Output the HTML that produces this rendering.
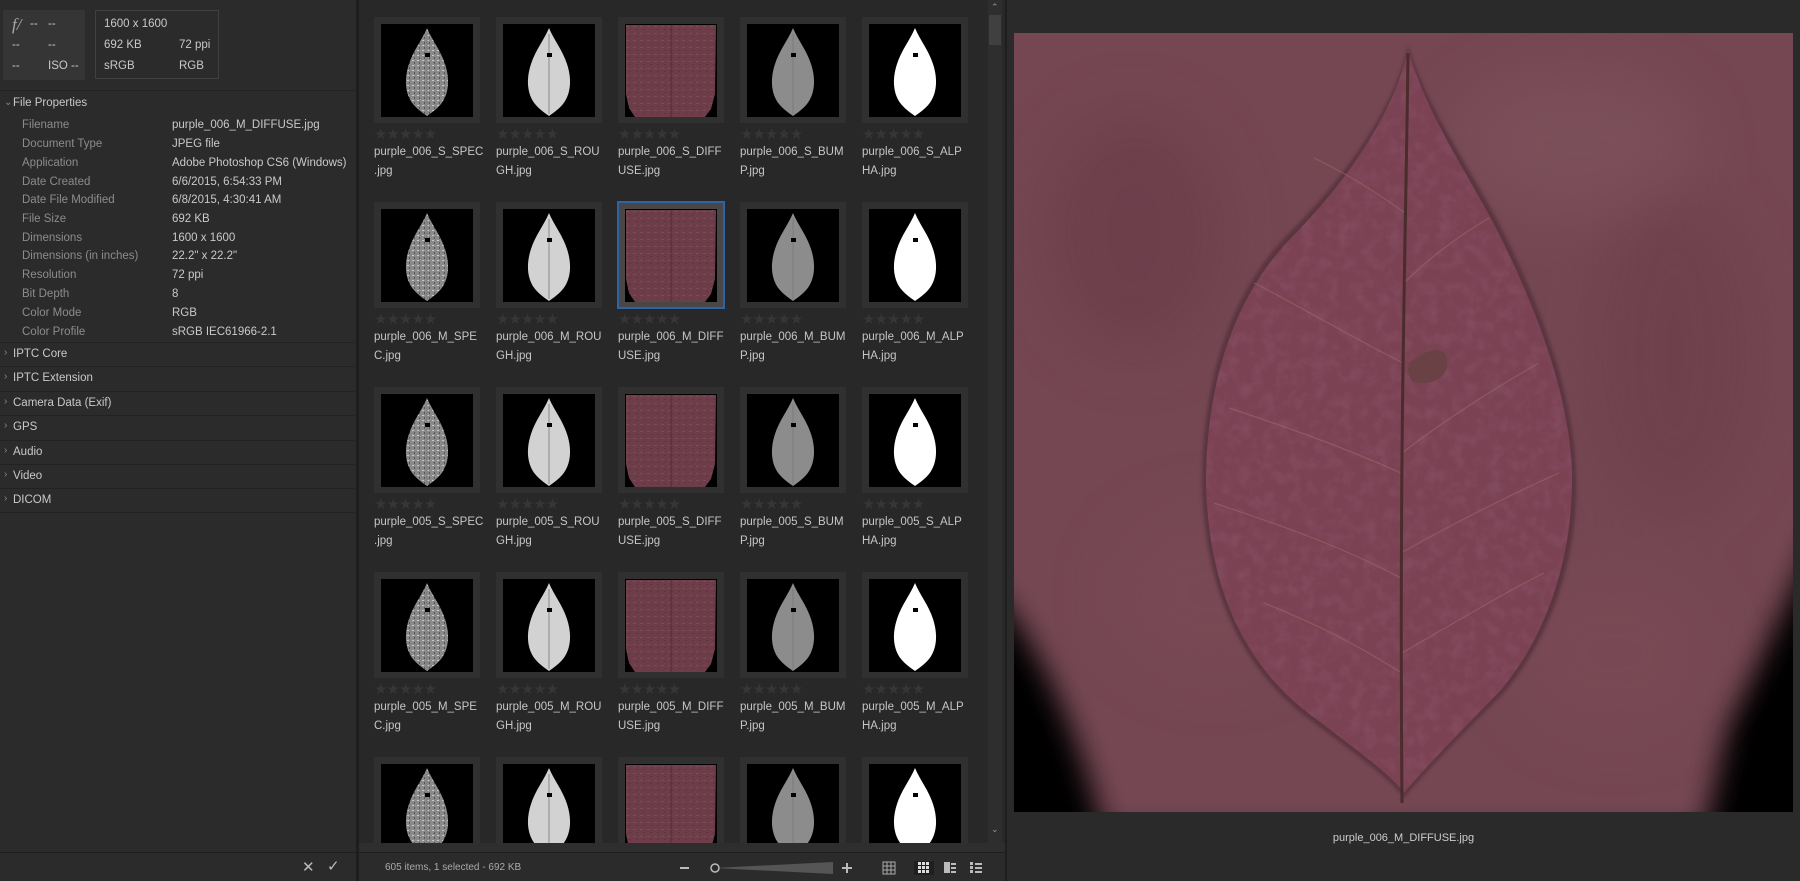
<!DOCTYPE html>
<html><head><meta charset="utf-8"><style>
*{margin:0;padding:0;box-sizing:border-box}
body{width:1800px;height:881px;overflow:hidden;background:#2b2b2b;font-family:"Liberation Sans",sans-serif;font-size:11.5px;color:#c9c9c9;position:relative}
.abs{position:absolute}
#left{left:0;top:0;width:356px;height:881px;background:#2b2b2b}
.box1{left:3px;top:10px;width:82px;height:70px;background:#353535}
.box2{left:95px;top:10px;width:124px;height:69px;border:1px solid #404040}
.t{position:absolute;white-space:nowrap}
.lab{color:#8c8c8c}
.sec{position:absolute;left:0;width:355px;height:24px;border-top:1px solid #222;}
.sec span{position:absolute;left:13px;top:5px}
.sec i{position:absolute;left:4px;top:4px;font-style:normal;color:#888;font-size:10px}
#grid{left:359px;top:0;width:646px;height:852px;background:#282828;overflow:hidden}
.cell{position:absolute;width:106px;height:106px;background:#303030}
.cell svg{position:absolute;left:7px;top:7px}
.stars{position:absolute;color:#363636;font-size:15px;letter-spacing:-1px;line-height:15px}
.lbl{position:absolute;line-height:19px;font-size:11.5px;color:#c6c6c6;white-space:nowrap}
#prev{left:1007px;top:0;width:793px;height:881px;background:#2a2a2a}
</style></head><body>
<svg width="0" height="0" style="position:absolute">
<defs>
<path id="leaf" d="M46 4 C51 16 60 27 64 40 C69 55 68 70 60 80 C55 86 50 89 46 92 C42 89 37 86 32 80 C24 70 23 55 28 40 C32 27 41 16 46 4Z"/>
<pattern id="tex" width="5" height="5" patternUnits="userSpaceOnUse"><rect width="5" height="5" fill="#8a8a8a"/><rect x="1" y="1" width="2" height="1" fill="#c8c8c8"/><rect x="3" y="3" width="1" height="2" fill="#555"/></pattern>
<pattern id="ptex" width="7" height="7" patternUnits="userSpaceOnUse"><rect width="7" height="7" fill="#6e3d4a"/><rect x="1" y="2" width="3" height="1" fill="#7e4b58"/><rect x="4" y="5" width="2" height="1" fill="#5e3440"/></pattern>
<filter id="bl"><feGaussianBlur stdDeviation="14"/></filter>
<filter id="bl2"><feGaussianBlur stdDeviation="30"/></filter>
<filter id="bl1"><feGaussianBlur stdDeviation="1.5"/></filter>
<filter id="noise"><feTurbulence type="fractalNoise" baseFrequency="0.08" numOctaves="3" seed="4"/><feColorMatrix values="0 0 0 0 0.3  0 0 0 0 0.12  0 0 0 0 0.18  0 0 0 0.7 -0.3"/><feComposite in2="SourceGraphic" operator="in"/></filter>
</defs></svg>

<div id="left" class="abs">
 <div class="abs box1"></div>
 <div class="t" style="left:12px;top:15px;font-family:'Liberation Serif',serif;font-style:italic;font-size:17px;color:#aaa">f/</div>
 <div class="t" style="left:30px;top:18px">--</div><div class="t" style="left:48px;top:18px">--</div>
 <div class="t" style="left:12px;top:39px">--</div><div class="t" style="left:48px;top:39px">--</div>
 <div class="t" style="left:12px;top:60px">--</div><div class="t" style="left:48px;top:60px">ISO --</div>
 <div class="abs box2"></div>
 <div class="t" style="left:104px;top:18px">1600 x 1600</div>
 <div class="t" style="left:104px;top:39px">692 KB</div><div class="t" style="left:179px;top:39px">72 ppi</div>
 <div class="t" style="left:104px;top:60px">sRGB</div><div class="t" style="left:179px;top:60px">RGB</div>
 <div class="abs" style="left:0;top:90px;width:355px;border-top:1px solid #222"></div>
 <div class="t" style="left:4px;top:97px;color:#888;font-size:10px">&#8964;</div>
 <div class="t" style="left:13px;top:97px">File Properties</div>
 <div class="t lab" style="left:22px;top:119px">Filename</div><div class="t" style="left:172px;top:119px">purple_006_M_DIFFUSE.jpg</div>
 <div class="t lab" style="left:22px;top:138px">Document Type</div><div class="t" style="left:172px;top:138px">JPEG file</div>
 <div class="t lab" style="left:22px;top:157px">Application</div><div class="t" style="left:172px;top:157px">Adobe Photoshop CS6 (Windows)</div>
 <div class="t lab" style="left:22px;top:176px">Date Created</div><div class="t" style="left:172px;top:176px">6/6/2015, 6:54:33 PM</div>
 <div class="t lab" style="left:22px;top:194px">Date File Modified</div><div class="t" style="left:172px;top:194px">6/8/2015, 4:30:41 AM</div>
 <div class="t lab" style="left:22px;top:213px">File Size</div><div class="t" style="left:172px;top:213px">692 KB</div>
 <div class="t lab" style="left:22px;top:232px">Dimensions</div><div class="t" style="left:172px;top:232px">1600 x 1600</div>
 <div class="t lab" style="left:22px;top:250px">Dimensions (in inches)</div><div class="t" style="left:172px;top:250px">22.2" x 22.2"</div>
 <div class="t lab" style="left:22px;top:269px">Resolution</div><div class="t" style="left:172px;top:269px">72 ppi</div>
 <div class="t lab" style="left:22px;top:288px">Bit Depth</div><div class="t" style="left:172px;top:288px">8</div>
 <div class="t lab" style="left:22px;top:307px">Color Mode</div><div class="t" style="left:172px;top:307px">RGB</div>
 <div class="t lab" style="left:22px;top:326px">Color Profile</div><div class="t" style="left:172px;top:326px">sRGB IEC61966-2.1</div>
 <div class="sec" style="top:342px"><i>&#8250;</i><span>IPTC Core</span></div>
 <div class="sec" style="top:366px"><i>&#8250;</i><span>IPTC Extension</span></div>
 <div class="sec" style="top:391px"><i>&#8250;</i><span>Camera Data (Exif)</span></div>
 <div class="sec" style="top:415px"><i>&#8250;</i><span>GPS</span></div>
 <div class="sec" style="top:440px"><i>&#8250;</i><span>Audio</span></div>
 <div class="sec" style="top:464px"><i>&#8250;</i><span>Video</span></div>
 <div class="sec" style="top:488px"><i>&#8250;</i><span>DICOM</span></div>
 <div class="abs" style="left:0;top:512px;width:355px;border-top:1px solid #222"></div>
 <div class="abs" style="left:0;top:852px;width:356px;height:29px;background:#2b2b2b;border-top:1px solid #1e1e1e"></div>
 <div class="t" style="left:302px;top:858px;font-size:15px;color:#bbb">&#10005;</div>
 <div class="t" style="left:327px;top:857px;font-size:15px;color:#bbb">&#10003;</div>
</div>
<div class="abs" style="left:356px;top:0;width:3px;height:881px;background:#1e1e1e"></div>

<div id="grid" class="abs">
<div id="cells"></div>
<div class="abs" style="left:629px;top:0;width:14px;height:852px;background:#2e2e2e"></div>
<div class="abs" style="left:630px;top:15px;width:12px;height:30px;background:#404040"></div>
<div class="t" style="left:632px;top:2px;font-size:9px;color:#999">&#8963;</div>
<div class="t" style="left:632px;top:824px;font-size:9px;color:#999">&#8964;</div>
</div>
<div class="abs" style="left:359px;top:843px;width:646px;height:9px;background:#2e2e2e"></div>
<div class="abs" style="left:359px;top:852px;width:646px;height:29px;background:#2b2b2b;border-top:1px solid #1e1e1e">
 <div class="t" style="left:26px;top:9px;font-size:10px;color:#aaa">605 items, 1 selected - 692 KB</div>
 <div class="abs" style="left:321px;top:14px;width:9px;height:2px;background:#bbb"></div>
 <svg class="abs" style="left:347px;top:8px" width="130" height="14"><polygon points="8,7 127,1 127,13" fill="#555"/><circle cx="9" cy="7" r="4" fill="#2b2b2b" stroke="#bbb" stroke-width="1.5"/></svg>
 <div class="abs" style="left:483px;top:14px;width:10px;height:2px;background:#bbb"></div>
 <div class="abs" style="left:487px;top:10px;width:2px;height:10px;background:#bbb"></div>
 <svg class="abs" style="left:523px;top:8px" width="120" height="14">
  <rect x="1" y="1" width="12" height="12" fill="none" stroke="#aaa"/><line x1="5" y1="1" x2="5" y2="13" stroke="#aaa"/><line x1="9" y1="1" x2="9" y2="13" stroke="#aaa"/><line x1="1" y1="5" x2="13" y2="5" stroke="#aaa"/><line x1="1" y1="9" x2="13" y2="9" stroke="#aaa"/>
  <rect x="32" y="-7" width="20" height="28" fill="#1f1f1f"/>
  <g fill="#ddd"><rect x="36" y="1" width="3" height="3"/><rect x="40" y="1" width="3" height="3"/><rect x="44" y="1" width="3" height="3"/><rect x="36" y="5" width="3" height="3"/><rect x="40" y="5" width="3" height="3"/><rect x="44" y="5" width="3" height="3"/><rect x="36" y="9" width="3" height="3"/><rect x="40" y="9" width="3" height="3"/><rect x="44" y="9" width="3" height="3"/></g>
  <g fill="#bbb"><rect x="62" y="1" width="6" height="11"/><rect x="69" y="2" width="5" height="2"/><rect x="69" y="6" width="5" height="2"/><rect x="69" y="10" width="5" height="2"/>
  <rect x="88" y="1" width="3" height="3"/><rect x="93" y="2" width="7" height="2"/><rect x="88" y="5" width="3" height="3"/><rect x="93" y="6" width="7" height="2"/><rect x="88" y="9" width="3" height="3"/><rect x="93" y="10" width="7" height="2"/></g>
 </svg>
</div>
<div class="abs" style="left:1005px;top:0;width:2px;height:881px;background:#1e1e1e"></div>

<div id="prev" class="abs">
 <svg class="abs" style="left:7px;top:33px" width="779" height="779" viewBox="0 0 779 779">
  <rect width="779" height="779" fill="#000"/>
  <g filter="url(#bl)">
   <path d="M-40 -40 L820 -40 L820 460 C790 530 760 600 715 690 L690 800 L90 800 C70 720 40 640 -10 570 L-40 550Z" fill="#744752"/>
  </g>
  <g filter="url(#bl2)" opacity="0.6">
   <ellipse cx="120" cy="200" rx="90" ry="120" fill="#683a46"/>
   <ellipse cx="660" cy="320" rx="80" ry="160" fill="#6a3c48"/>
   <ellipse cx="560" cy="110" rx="120" ry="70" fill="#80555f"/>
   <ellipse cx="200" cy="560" rx="100" ry="80" fill="#7a4c57"/>
   <ellipse cx="600" cy="620" rx="100" ry="80" fill="#7a4c57"/>
  </g>
  <path id="pl" d="M394 12 C382 70 335 140 275 200 C215 260 188 350 188 450 C190 560 230 640 300 690 C340 720 375 745 390 765 C410 740 450 700 490 660 C540 600 565 520 562 440 C560 360 525 270 490 200 C460 140 415 80 394 12Z" fill="#5a3540" filter="url(#bl1)"/>
  <path d="M394 16 C382 74 338 143 279 203 C219 263 192 352 192 450 C194 558 233 637 302 686 C341 716 375 740 390 760 C409 737 448 697 487 657 C536 598 559 520 558 440 C556 362 521 273 486 203 C456 143 413 84 394 16Z" fill="#7b4254"/>
  <path d="M394 16 C382 74 338 143 279 203 C219 263 192 352 192 450 C194 558 233 637 302 686 C341 716 375 740 390 760 C409 737 448 697 487 657 C536 598 559 520 558 440 C556 362 521 273 486 203 C456 143 413 84 394 16Z" fill="#7b4254" filter="url(#noise)"/>
  <g stroke="#a0706c" stroke-width="1.2" fill="none" opacity="0.5">
   <path d="M391 180 C350 150 320 135 300 125"/><path d="M390 250 C420 220 450 200 475 185"/><path d="M389 330 C330 300 280 270 240 250"/><path d="M388 420 C440 380 490 350 525 330"/><path d="M387 440 C320 410 260 390 215 375"/><path d="M387 520 C440 490 500 460 545 440"/><path d="M387 545 C320 510 260 490 200 470"/><path d="M388 620 C440 590 490 560 530 540"/><path d="M388 640 C340 610 300 590 250 570"/>
  </g>
  <path d="M394 20 C392 200 385 400 388 770" stroke="#4a2c2c" stroke-width="3" fill="none"/>
  <path d="M395 330 C410 318 425 312 432 322 C437 338 426 350 410 350 C398 352 392 345 395 330Z" fill="#6a4246"/>
 </svg>
 <div class="t" style="left:0;width:793px;text-align:center;top:832px;font-size:11px;color:#ccc">purple_006_M_DIFFUSE.jpg</div>
</div>

<script>
(function(){
 var pre=["purple_006_S_","purple_006_M_","purple_005_S_","purple_005_M_","purple_005_L_"];
 var types=["SPEC","ROUGH","DIFFUSE","BUMP","ALPHA"];
 var fills={SPEC:"url(#tex)",ROUGH:"#d2d2d2",BUMP:"#8c8c8c",ALPHA:"#ffffff"};
 var h="";
 for(var r=0;r<5;r++){
  var y=17+r*185;
  for(var c=0;c<5;c++){
   var x=15+c*122, t=types[c], sel=(r==1&&c==2);
   h+='<div class="cell" style="left:'+x+'px;top:'+y+'px;'+(sel?'background:#474747;outline:2px solid #2f62a6;outline-offset:-1px;':'')+'">';
   h+='<svg width="92" height="93" viewBox="0 0 92 93"><rect width="92" height="93" fill="#000"/>';
   if(t=="DIFFUSE"){h+='<path d="M1 1 L91 1 L90 70 L86 85 L80 93 L10 93 L4 84 L1 70Z" fill="url(#ptex)"/><line x1="46" y1="1" x2="46" y2="93" stroke="#4e2a33" stroke-width="0.8"/>';}
   else{h+='<use href="#leaf" fill="'+fills[t]+'"/><line x1="46" y1="10" x2="46" y2="90" stroke="'+(t=="ALPHA"?"#fff":"#777")+'" stroke-width="0.8"/><rect x="44" y="29" width="5" height="4" fill="#000"/>';}
   h+='</svg></div>';
   h+='<div class="stars" style="left:'+x+'px;top:'+(y+110)+'px">&#9733;&#9733;&#9733;&#9733;&#9733;</div>';
   var n=pre[r]+t+".jpg";
   var k=(t=="DIFFUSE"||(t=="SPEC"&&pre[r].indexOf("_S_")>0))?17:16;
   h+='<div class="lbl" style="left:'+(x)+'px;top:'+(y+126)+'px">'+n.slice(0,k)+'<br>'+n.slice(k)+'</div>';
  }
 }
 document.getElementById("cells").innerHTML=h;
})();
</script>
</body></html>
